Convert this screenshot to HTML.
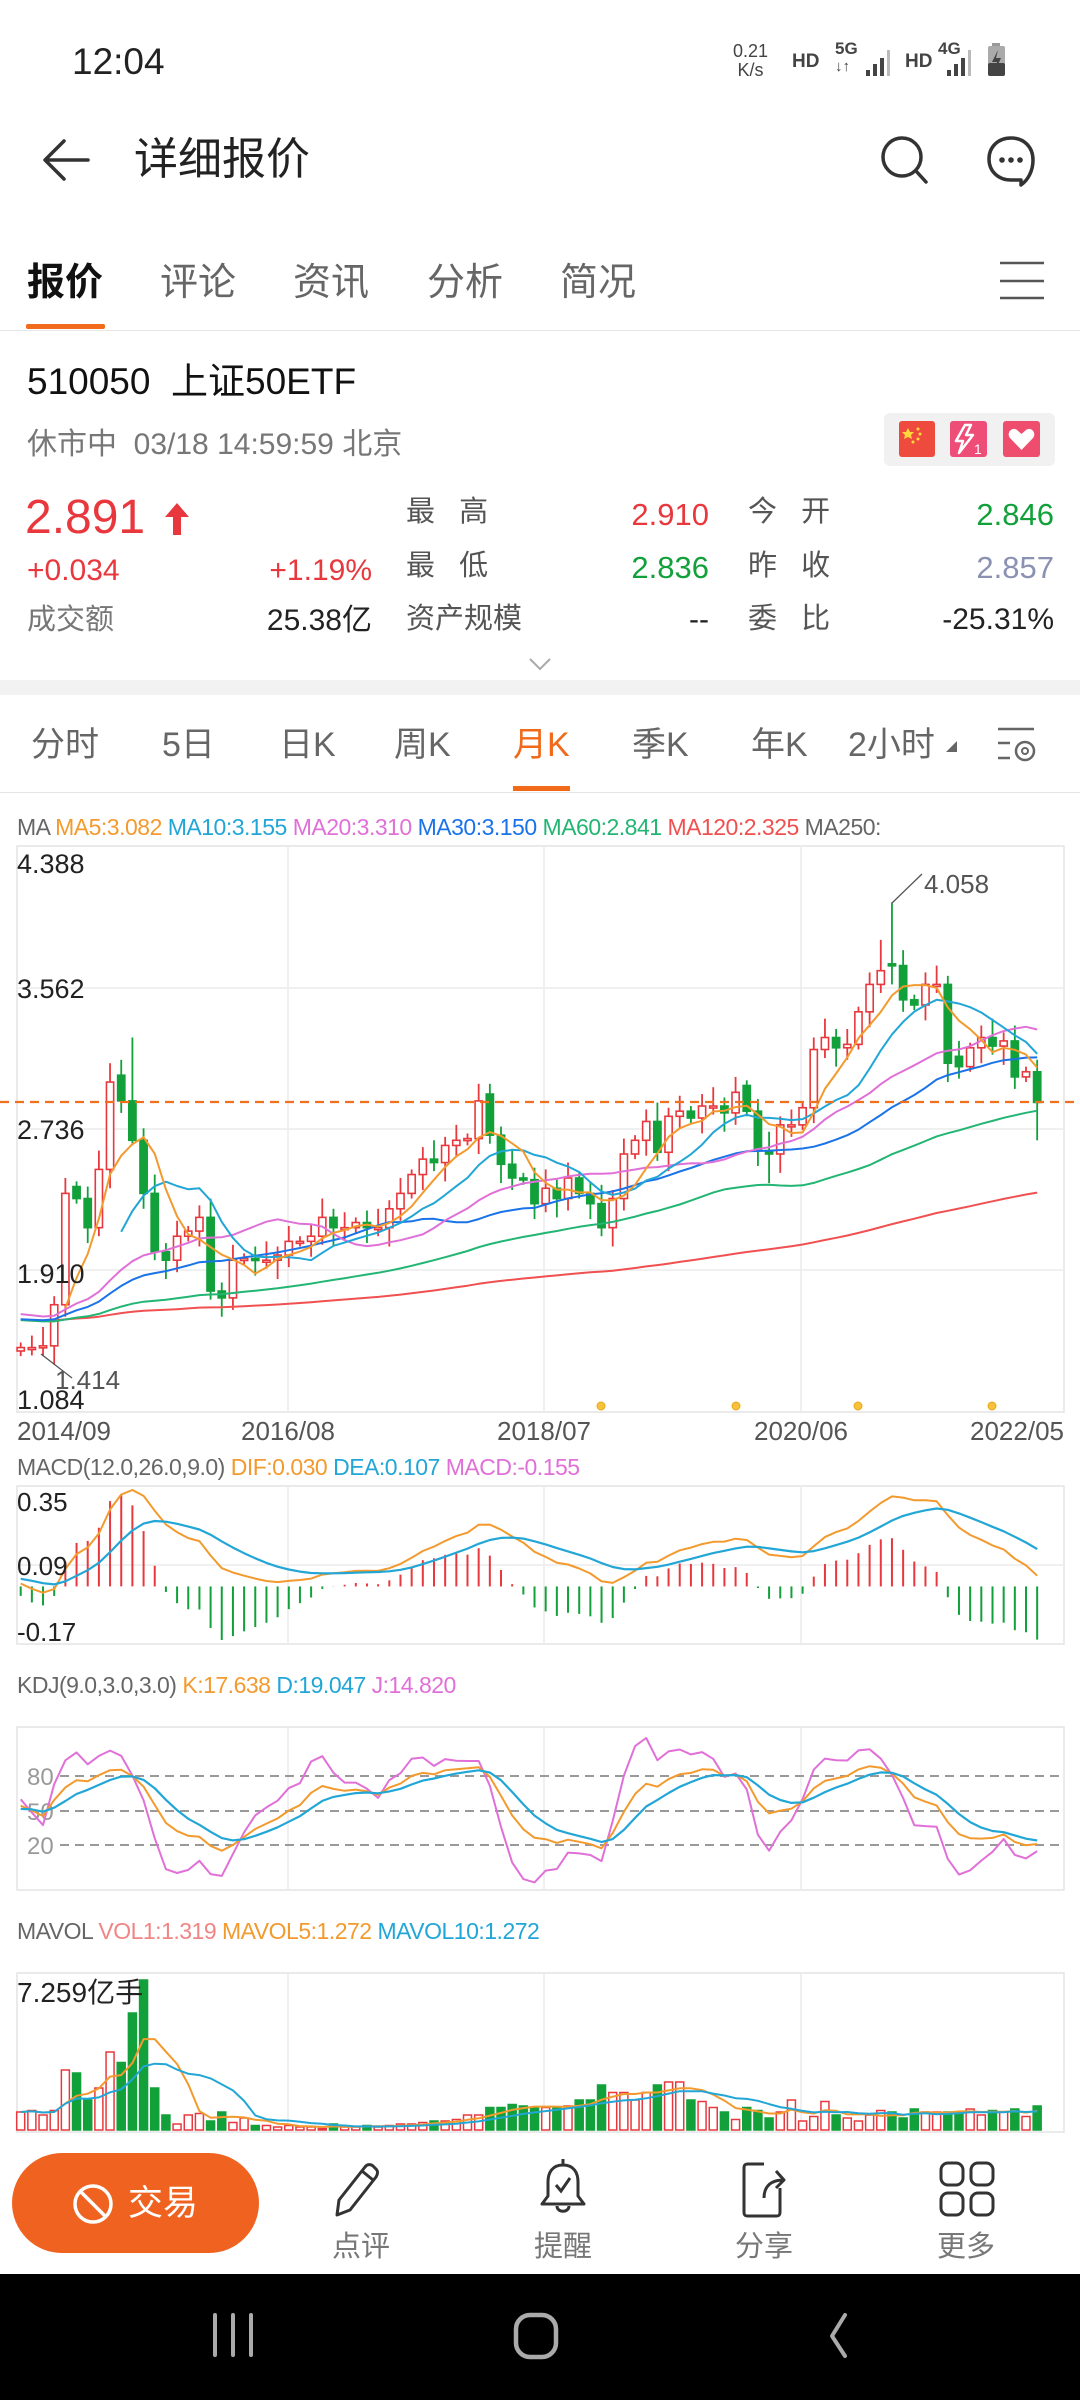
<!DOCTYPE html>
<html><head><meta charset="utf-8">
<style>
*{margin:0;padding:0;box-sizing:border-box}
body{width:1080px;height:2400px;background:#fff;position:relative;overflow:hidden;font-family:"Liberation Sans","Noto Sans CJK SC",sans-serif;color:#222}
.a{position:absolute;white-space:nowrap;line-height:1}
.g{color:#777}
.r{color:#E8383D}
.gr{color:#12A03A}
</style></head><body>
<!-- status bar -->
<div class="a" style="left:72px;top:43px;font-size:37px;color:#222">12:04</div>
<div class="a" style="left:733px;top:42px;font-size:18px;color:#444;text-align:center;line-height:19px">0.21<br>K/s</div>
<div class="a" style="left:792px;top:52px;font-size:19px;font-weight:bold;color:#444">HD</div>
<div class="a" style="left:835px;top:40px;font-size:17px;font-weight:bold;color:#444;line-height:17px">5G<br><span style="font-size:15px">↓↑</span></div>
<div class="a" style="left:905px;top:52px;font-size:19px;font-weight:bold;color:#444">HD</div>
<div class="a" style="left:938px;top:40px;font-size:17px;font-weight:bold;color:#444">4G</div>
<svg class="a" style="left:860px;top:44px" width="120" height="36">
<rect x="6" y="26" width="4" height="6" fill="#444"/><rect x="13" y="20" width="4" height="12" fill="#444"/><rect x="20" y="14" width="4" height="18" fill="#444"/><rect x="27" y="6" width="3" height="26" fill="#bbb"/>
<rect x="87" y="26" width="4" height="6" fill="#444"/><rect x="94" y="20" width="4" height="12" fill="#444"/><rect x="101" y="14" width="4" height="18" fill="#444"/><rect x="108" y="6" width="3" height="26" fill="#bbb"/>
</svg>
<svg class="a" style="left:986px;top:43px" width="24" height="36"><rect x="6" y="0" width="8" height="3" fill="#999"/><rect x="2" y="3" width="17" height="30" rx="2" fill="#aaa"/><rect x="2" y="20" width="17" height="13" rx="2" fill="#444"/><path d="M12 7 L6 19 H11 L9 28 L15 15 H10 Z" fill="#444"/></svg>

<!-- title bar -->
<svg class="a" style="left:40px;top:135px" width="56" height="50"><path d="M48 25 H6 M24 6 L5 25 L24 44" stroke="#333" stroke-width="3.5" fill="none" stroke-linecap="round" stroke-linejoin="round"/></svg>
<div class="a" style="left:134px;top:138px;font-size:44px;color:#222">详细报价</div>
<svg class="a" style="left:878px;top:133px" width="56" height="56"><circle cx="24" cy="24" r="19" stroke="#333" stroke-width="3.5" fill="none"/><path d="M38 38 L48 49" stroke="#333" stroke-width="3.5" stroke-linecap="round"/></svg>
<svg class="a" style="left:984px;top:133px" width="56" height="56"><path d="M27 5 C14 5 5 14 5 26 C5 38 14 47 27 47 L37 47 L37 52 C44 47 49 38 49 27 C49 14 40 5 27 5 Z" stroke="#333" stroke-width="3.5" fill="none" stroke-linejoin="round"/><circle cx="18" cy="27" r="2.8" fill="#333"/><circle cx="27" cy="27" r="2.8" fill="#333"/><circle cx="36" cy="27" r="2.8" fill="#333"/></svg>

<!-- tabs -->
<div class="a" style="left:27px;top:264px;font-size:38px;font-weight:bold;color:#111">报价</div>
<div class="a" style="left:160px;top:264px;font-size:38px;color:#666">评论</div>
<div class="a" style="left:293px;top:264px;font-size:38px;color:#666">资讯</div>
<div class="a" style="left:427px;top:264px;font-size:38px;color:#666">分析</div>
<div class="a" style="left:560px;top:264px;font-size:38px;color:#666">简况</div>
<div class="a" style="left:26px;top:324px;width:79px;height:5px;background:#F26B1D;border-radius:2px"></div>
<svg class="a" style="left:998px;top:260px" width="48" height="40"><path d="M2 3 H46 M2 21 H46 M2 38 H46" stroke="#555" stroke-width="2.5"/></svg>
<div class="a" style="left:0;top:330px;width:1080px;height:1px;background:#e6e6e6"></div>

<!-- stock info -->
<div class="a" style="left:27px;top:363px;font-size:37px;color:#111">510050&nbsp; 上证50ETF</div>
<div class="a g" style="left:27px;top:430px;font-size:30px;color:#777">休市中&nbsp;&nbsp;03/18 14:59:59 北京</div>
<div class="a" style="left:884px;top:413px;width:171px;height:53px;background:#f1f1f1;border-radius:6px"></div>
<svg class="a" style="left:899px;top:421px" width="145" height="37">
<rect x="0" y="0" width="36" height="36" rx="3" fill="#EE4B3E"/><path d="M9 7 l2 4 4 0 -3 3 1 4 -4 -2 -4 2 1 -4 -3 -3 4 0z" fill="#FFD93B"/><circle cx="19" cy="8" r="1.5" fill="#FFD93B"/><circle cx="21" cy="13" r="1.5" fill="#FFD93B"/><circle cx="19" cy="18" r="1.5" fill="#FFD93B"/><circle cx="14" cy="21" r="1.5" fill="#FFD93B"/>
<rect x="51" y="0" width="37" height="36" rx="3" fill="#EE4D78"/><path d="M66 4 L57 20 H64 L60 32 L74 14 H67 L72 4 Z" fill="none" stroke="#fff" stroke-width="2.5" stroke-linejoin="round"/><text x="75" y="33" font-size="14" fill="#fff" font-family="Liberation Sans">1</text>
<rect x="104" y="0" width="37" height="36" rx="3" fill="#EE4D6E"/><path d="M122.5 29 L111 17 C107 12 113 5 118 9 L122.5 13 L127 9 C132 5 138 12 134 17 Z" fill="#fff"/>
</svg>

<!-- price block -->
<div class="a" style="left:25px;top:494px;font-size:48px;color:#E8383D">2.891</div>
<svg class="a" style="left:163px;top:502px" width="28" height="34"><path d="M14 1 L26 15 H18 V33 H10 V15 H2 Z" fill="#E8383D"/></svg>
<div class="a r" style="left:27px;top:556px;font-size:30px">+0.034</div>
<div class="a r" style="right:708px;top:556px;font-size:30px">+1.19%</div>
<div class="a g" style="left:27px;top:606px;font-size:29px">成交额</div>
<div class="a" style="right:708px;top:606px;font-size:30px;color:#222">25.38亿</div>

<div class="a" style="left:406px;top:498px;font-size:29px;color:#555">最&nbsp;&nbsp;&nbsp;高</div>
<div class="a" style="left:406px;top:552px;font-size:29px;color:#555">最&nbsp;&nbsp;&nbsp;低</div>
<div class="a" style="left:406px;top:605px;font-size:29px;color:#555">资产规模</div>
<div class="a r" style="right:371px;top:499px;font-size:31px">2.910</div>
<div class="a gr" style="right:371px;top:552px;font-size:31px">2.836</div>
<div class="a" style="right:371px;top:605px;font-size:30px;color:#222">--</div>
<div class="a" style="left:748px;top:498px;font-size:29px;color:#555">今&nbsp;&nbsp;&nbsp;开</div>
<div class="a" style="left:748px;top:552px;font-size:29px;color:#555">昨&nbsp;&nbsp;&nbsp;收</div>
<div class="a" style="left:748px;top:605px;font-size:29px;color:#555">委&nbsp;&nbsp;&nbsp;比</div>
<div class="a gr" style="right:26px;top:499px;font-size:31px">2.846</div>
<div class="a" style="right:26px;top:552px;font-size:31px;color:#8A91B3">2.857</div>
<div class="a" style="right:26px;top:605px;font-size:30px;color:#222">-25.31%</div>
<svg class="a" style="left:528px;top:656px" width="24" height="16"><path d="M2 3 L12 13 L22 3" stroke="#aaa" stroke-width="2" fill="none"/></svg>
<div class="a" style="left:0;top:680px;width:1080px;height:15px;background:#f2f2f2"></div>

<!-- period tabs -->
<div class="a" style="left:31px;top:728px;font-size:34px;color:#666">分时</div>
<div class="a" style="left:162px;top:728px;font-size:34px;color:#666">5日</div>
<div class="a" style="left:279px;top:728px;font-size:34px;color:#666">日K</div>
<div class="a" style="left:394px;top:728px;font-size:34px;color:#666">周K</div>
<div class="a" style="left:513px;top:728px;font-size:34px;color:#F06A1A">月K</div>
<div class="a" style="left:632px;top:728px;font-size:34px;color:#666">季K</div>
<div class="a" style="left:751px;top:728px;font-size:34px;color:#666">年K</div>
<div class="a" style="left:848px;top:728px;font-size:34px;color:#666">2小时</div>
<svg class="a" style="left:945px;top:740px" width="14" height="14"><path d="M12 1 L12 12 L1 12 Z" fill="#666"/></svg>
<svg class="a" style="left:996px;top:725px" width="48" height="40"><path d="M2 4 H38 M2 18 H14 M2 33 H14" stroke="#666" stroke-width="2.5"/><circle cx="29" cy="26" r="9" stroke="#666" stroke-width="2.5" fill="none"/><circle cx="29" cy="26" r="3" stroke="#666" stroke-width="2" fill="none"/></svg>
<div class="a" style="left:513px;top:786px;width:57px;height:5px;background:#F06A1A"></div>
<div class="a" style="left:0;top:792px;width:1080px;height:1px;background:#e6e6e6"></div>

<!-- legends -->
<div class="a" style="left:17px;top:816px;font-size:23px;letter-spacing:-0.5px"><span style="color:#666">MA</span> <span style="color:#F39A2E">MA5:3.082</span> <span style="color:#22A6D6">MA10:3.155</span> <span style="color:#E070D8">MA20:3.310</span> <span style="color:#1A73E8">MA30:3.150</span> <span style="color:#22B573">MA60:2.841</span> <span style="color:#F05050">MA120:2.325</span> <span style="color:#666">MA250:</span></div>
<div class="a" style="left:17px;top:1456px;font-size:23px;letter-spacing:-0.5px"><span style="color:#666">MACD(12.0,26.0,9.0)</span> <span style="color:#F39A2E">DIF:0.030</span> <span style="color:#22A6D6">DEA:0.107</span> <span style="color:#E070D8">MACD:-0.155</span></div>
<div class="a" style="left:17px;top:1674px;font-size:23px;letter-spacing:-0.5px"><span style="color:#666">KDJ(9.0,3.0,3.0)</span> <span style="color:#F39A2E">K:17.638</span> <span style="color:#22A6D6">D:19.047</span> <span style="color:#E070D8">J:14.820</span></div>
<div class="a" style="left:17px;top:1920px;font-size:23px;letter-spacing:-0.5px"><span style="color:#666">MAVOL</span> <span style="color:#F08585">VOL1:1.319</span> <span style="color:#F39A2E">MAVOL5:1.272</span> <span style="color:#22A6D6">MAVOL10:1.272</span></div>

<svg id="ch" class="a" style="left:0;top:0" width="1080" height="2140" font-family="Liberation Sans, Noto Sans CJK SC, sans-serif"></svg>

<!-- bottom bar -->
<div class="a" style="left:12px;top:2153px;width:247px;height:100px;background:#F0621F;border-radius:50px"></div>
<svg class="a" style="left:72px;top:2183px" width="42" height="42"><circle cx="21" cy="21" r="18" stroke="#fff" stroke-width="3.5" fill="none"/><path d="M9 9 L33 33" stroke="#fff" stroke-width="3.5"/></svg>
<div class="a" style="left:128px;top:2186px;font-size:35px;color:#fff">交易</div>
<svg class="a" style="left:330px;top:2160px" width="60" height="60"><path d="M7 55 L9 40 L35 7 C37 4 41 4 43 6 L46 9 C48 11 48 14 46 17 L20 50 Z M32 11 L43 20" stroke="#333" stroke-width="3" fill="none" stroke-linejoin="round"/></svg>
<svg class="a" style="left:533px;top:2156px" width="60" height="66"><path d="M30 3 V9 M30 9 C19 9 15 17 15 26 V40 L9 48 H51 L45 40 V26 C45 17 41 9 30 9 Z M24 50 C24 57 36 57 36 50" stroke="#333" stroke-width="3" fill="none" stroke-linejoin="round"/><path d="M23 29 L28 35 L37 22" stroke="#333" stroke-width="3" fill="none"/></svg>
<svg class="a" style="left:734px;top:2158px" width="60" height="66"><path d="M30 6 H14 C11 6 10 7 10 10 V54 C10 57 11 58 14 58 H42 C45 58 46 57 46 54 V30 M30 40 C30 30 35 22 50 22 M42 13 L50 22 L42 30" stroke="#333" stroke-width="3" fill="none" stroke-linejoin="round"/></svg>
<svg class="a" style="left:938px;top:2160px" width="58" height="58"><rect x="3" y="3" width="22" height="22" rx="7" stroke="#333" stroke-width="3" fill="none"/><rect x="33" y="3" width="22" height="22" rx="7" stroke="#333" stroke-width="3" fill="none"/><rect x="3" y="33" width="22" height="22" rx="7" stroke="#333" stroke-width="3" fill="none"/><rect x="33" y="33" width="22" height="22" rx="7" stroke="#333" stroke-width="3" fill="none"/></svg>
<div class="a" style="left:332px;top:2233px;font-size:29px;color:#777">点评</div>
<div class="a" style="left:534px;top:2233px;font-size:29px;color:#777">提醒</div>
<div class="a" style="left:735px;top:2233px;font-size:29px;color:#777">分享</div>
<div class="a" style="left:937px;top:2233px;font-size:29px;color:#777">更多</div>

<!-- nav bar -->
<div class="a" style="left:0;top:2274px;width:1080px;height:126px;background:#000"></div>
<svg class="a" style="left:200px;top:2310px" width="700" height="50"><path d="M15 5 V45 M33 5 V45 M51 5 V45" stroke="#aaa" stroke-width="4" stroke-linecap="round"/><rect x="316" y="5" width="40" height="42" rx="14" stroke="#aaa" stroke-width="4.5" fill="none"/><path d="M645 5 L632 26 L645 46" stroke="#aaa" stroke-width="4" fill="none" stroke-linecap="round" stroke-linejoin="round"/></svg>

<script>
(function(){
var S=document.getElementById('ch'),h='';
function L(x1,y1,x2,y2,c,w,d){h+='<line x1="'+x1+'" y1="'+y1+'" x2="'+x2+'" y2="'+y2+'" stroke="'+c+'" stroke-width="'+(w||1)+'"'+(d?' stroke-dasharray="'+d+'"':'')+'/>';}
function T(x,y,s,c,sz,anc){h+='<text x="'+x+'" y="'+y+'" fill="'+c+'" font-size="'+sz+'"'+(anc?' text-anchor="'+anc+'"':'')+'>'+s+'</text>';}
function P(pts,c,w){var d='';pts.forEach(function(p,i){if(p[1]==null||isNaN(p[1]))return;d+=(d?'L':'M')+p[0].toFixed(1)+' '+p[1].toFixed(1);});h+='<path d="'+d+'" stroke="'+c+'" stroke-width="'+(w||2)+'" fill="none" stroke-linejoin="round"/>';}
var C=[1.46,1.46,1.47,1.71,2.36,2.33,2.16,2.50,3.01,2.90,2.67,2.36,2.02,1.97,2.11,2.14,2.22,1.79,1.75,1.97,1.98,1.97,1.97,2.00,2.08,2.08,2.11,2.22,2.16,2.16,2.19,2.16,2.16,2.27,2.36,2.47,2.56,2.54,2.64,2.67,2.68,2.90,2.70,2.53,2.45,2.44,2.30,2.39,2.33,2.45,2.36,2.30,2.16,2.33,2.59,2.67,2.78,2.60,2.81,2.84,2.80,2.87,2.87,2.83,2.95,2.84,2.61,2.59,2.76,2.76,2.86,3.20,3.27,3.21,3.23,3.42,3.58,3.66,3.69,3.49,3.46,3.58,3.58,3.12,3.10,3.21,3.27,3.22,3.25,3.04,3.07,2.891];
var V=[.12,.13,.1,.13,.4,.38,.2,.28,.52,.45,.78,1.0,.28,.1,.04,.1,.11,.06,.12,.05,.08,.03,.03,.02,.03,.02,.02,.01,.04,.02,.02,.03,.02,.03,.04,.04,.05,.06,.06,.07,.1,.1,.15,.15,.17,.16,.15,.15,.15,.16,.2,.2,.3,.25,.25,.2,.25,.3,.32,.32,.2,.19,.15,.12,.07,.15,.13,.08,.12,.2,.06,.09,.19,.1,.08,.06,.1,.13,.12,.08,.14,.12,.12,.12,.12,.14,.1,.13,.12,.14,.09,.16];
var n=C.length,O=[],H=[],Lo=[];
for(var i=0;i<n;i++){var o=i?C[i-1]:1.44;if(i==5||i==9||i==42||i==65||i==78||i==84)o=C[i-1]+0.04;O.push(o);var mx=Math.max(o,C[i]),mn=Math.min(o,C[i]);H.push(mx+0.03+((i*7)%5)*0.02);Lo.push(mn-0.03-((i*3)%5)*0.02);}
H[10]=3.27;H[78]=4.058;H[77]=3.84;Lo[1]=1.414;Lo[67]=2.42;Lo[91]=2.67;H[8]=3.12;H[41]=3.0;H[42]=3.0;
var hist=[];for(i=0;i<130;i++)hist.push(1.62+0.08*Math.sin(i/9));
var all=hist.concat(C),off=hist.length;
function X(i){return 20.7+i*11.17;}
function PY(p){return 846+(4.388-p)*171.3;}
// grids
function box(t,b){h+='<rect x="17" y="'+t+'" width="1047" height="'+(b-t)+'" fill="none" stroke="#e4e4e4" stroke-width="1.5"/>';[288,544,801].forEach(function(x){L(x,t,x,b,'#ececec',1.5);});}
box(846,1412);[988,1129,1270].forEach(function(y){L(17,y,1064,y,'#ececec',1.5);});
box(1486,1644);L(17,1565,1064,1565,'#ececec',1.5);
box(1727,1890);box(1973,2132);
// MAs
var MAc={5:'#F39A2E',10:'#22A6D6',20:'#E070D8',30:'#1A73E8',60:'#22B573',120:'#F05050'};
function ma(arr,k,j){var s=0;for(var q=j-k+1;q<=j;q++)s+=arr[q];return s/k;}
// candles
for(i=0;i<n;i++){var x=X(i),o=O[i],c=C[i],up=c>=o,col=up?'#E8383D':'#12A03A';var t=PY(Math.max(o,c)),b=PY(Math.min(o,c));if(b-t<2)b=t+2;
L(x,PY(H[i]),x,t,col,1.8);L(x,b,x,PY(Lo[i]),col,1.8);
h+='<rect x="'+(x-3.6)+'" y="'+t+'" width="7.2" height="'+(b-t)+'" fill="'+(up?'#fff':col)+'" stroke="'+col+'" stroke-width="1.6"/>';}
[120,60,30,20,10,5].forEach(function(k){var pts=[];for(var i=0;i<n;i++){var j=i+off;var m=(k<=10&&i<k-1)?null:ma(all,k,j);pts.push([X(i),m==null?null:PY(m)]);}P(pts,MAc[k],2);});
L(0,1102,1080,1102,'#F0701E',2.2,'9,6');
T(17,873,'4.388','#222',27);T(17,998,'3.562','#222',27);T(17,1139,'2.736','#222',27);T(17,1283,'1.910','#222',27);T(17,1409,'1.084','#222',27);
L(892,903,922,874,'#555',1.3);T(924,893,'4.058','#555',26);
L(41,1354,72,1378,'#555',1.3);T(55,1389,'1.414','#555',26);
[601,736,858,992].forEach(function(x){h+='<circle cx="'+x+'" cy="1406" r="4" fill="#F5C23A" stroke="#E8A820" stroke-width="1"/>';});
T(17,1440,'2014/09','#555',26);T(288,1440,'2016/08','#555',26,'middle');T(544,1440,'2018/07','#555',26,'middle');T(801,1440,'2020/06','#555',26,'middle');T(1064,1440,'2022/05','#555',26,'end');
// MACD
var e12=all[0],e26=all[0],dea=0,DIF=[],DEA=[],M=[];
for(var j=0;j<all.length;j++){e12=e12*11/13+all[j]*2/13;e26=e26*25/27+all[j]*2/27;var d=e12-e26;dea=dea*0.8+d*0.2;if(j>=off){DIF.push(d);DEA.push(dea);M.push(2*(d-dea));}}
var mx=-1e9,mn=1e9;for(i=0;i<n;i++){mx=Math.max(mx,DIF[i],DEA[i],M[i]);mn=Math.min(mn,DIF[i],DEA[i],M[i]);}
function MY(v){return 1490+(mx-v)/(mx-mn)*150;}
for(i=0;i<n;i++){L(X(i),MY(0),X(i),MY(M[i]),M[i]>=0?'#E8383D':'#12A03A',2);}
P(DIF.map(function(v,i){return[X(i),MY(v)];}),'#F39A2E',2);P(DEA.map(function(v,i){return[X(i),MY(v)];}),'#22A6D6',2.2);
T(17,1511,'0.35','#222',26);T(17,1575,'0.09','#222',26);T(17,1641,'-0.17','#222',26);
// KDJ
var K=50,D=50,KK=[],DD=[],JJ=[];
for(i=0;i<n;i++){var hh=-1e9,ll=1e9;for(var q=Math.max(0,i-8);q<=i;q++){hh=Math.max(hh,H[q]);ll=Math.min(ll,Lo[q]);}var rsv=(C[i]-ll)/(hh-ll)*100;K=K*2/3+rsv/3;D=D*2/3+K/3;KK.push(K);DD.push(D);JJ.push(3*K-2*D);}
function KY(v){v=Math.max(-18,Math.min(118,v));return 1868-v*1.15;}
[[80,1776],[50,1811],[20,1845]].forEach(function(a){L(60,a[1],1064,a[1],'#999',2,'9,6');T(27,a[1]+9,a[0],'#999',24);});
P(JJ.map(function(v,i){return[X(i),KY(v)];}),'#E070D8',2);P(KK.map(function(v,i){return[X(i),KY(v)];}),'#F39A2E',2);P(DD.map(function(v,i){return[X(i),KY(v)];}),'#22A6D6',2.2);
// volume
function VY(v){return 2130-v*150;}
for(i=0;i<n&&i<V.length;i++){var up=C[i]>=O[i],col=up?'#E8383D':'#12A03A',t=VY(V[i]);h+='<rect x="'+(X(i)-4)+'" y="'+t+'" width="8" height="'+(2130-t)+'" fill="'+(up?'#fff':col)+'" stroke="'+col+'" stroke-width="1.5"/>';}
[[5,'#F39A2E'],[10,'#22A6D6']].forEach(function(a){var pts=[];for(var i=0;i<V.length;i++){var k=Math.min(a[0],i+1);pts.push([X(i),VY(ma(V,k,i))]);}P(pts,a[1],2);});
T(17,2002,'7.259亿手','#222',28);
S.innerHTML=h;
})();
</script>
</body></html>
